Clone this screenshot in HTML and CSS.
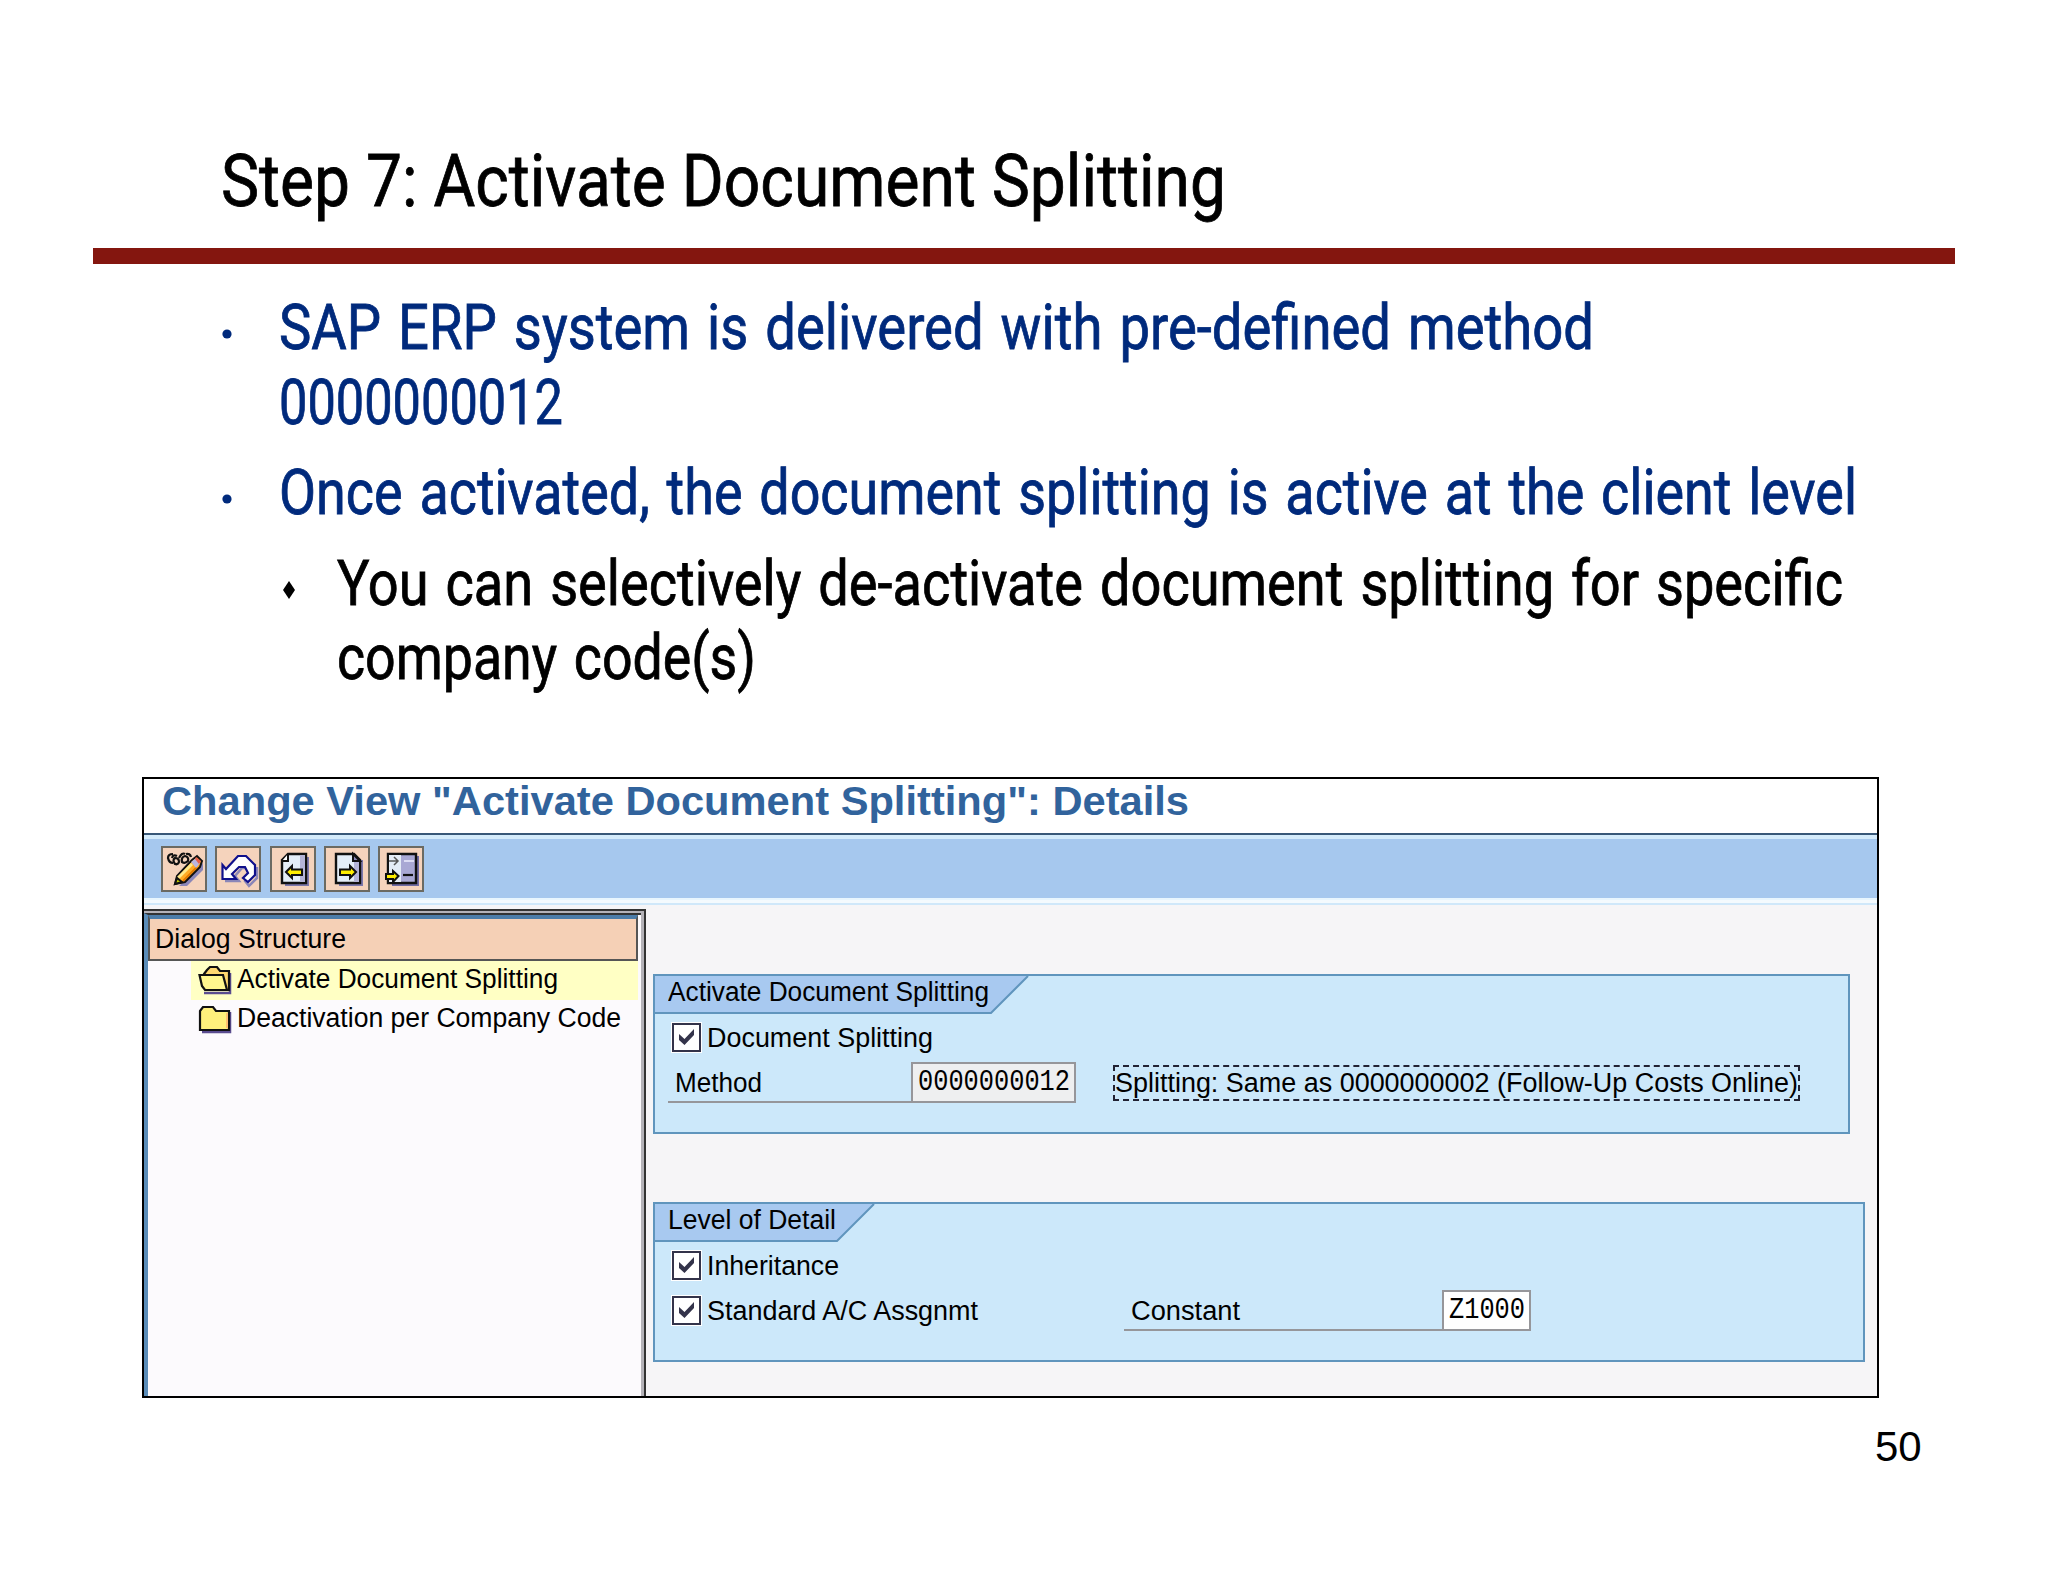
FILE: index.html
```
<!DOCTYPE html>
<html lang="en">
<head>
    <meta charset="UTF-8">
    <meta name="viewport" content="width=device-width, initial-scale=1.0">
    <title>Step 7: Activate Document Splitting</title>
    <link rel="stylesheet" href="styles.css">
</head>
<body>
    <div class="slide">
        <h1><span class="fit" data-width="1005">Step 7: Activate Document Splitting</span></h1>
        <div class="rule"></div>

        <ul class="points">
            <li>
                <svg class="dot" viewBox="0 0 10 10"><circle cx="5" cy="5" r="4.6"/></svg>
                <div>
                    <p><span class="fit" data-width="1315">SAP ERP system is delivered with pre-defined method</span></p>
                    <p><span class="fit" data-width="284">0000000012</span></p>
                </div>
            </li>
            <li>
                <svg class="dot" viewBox="0 0 10 10"><circle cx="5" cy="5" r="4.6"/></svg>
                <div>
                    <p><span class="fit" data-width="1578">Once activated, the document splitting is active at the client level</span></p>
                </div>
            </li>
            <li class="sub">
                <svg class="diamond" viewBox="0 0 12 18"><path d="M6 0L12 9L6 18L0 9Z"/></svg>
                <div>
                    <p><span class="fit" data-width="1506">You can selectively de-activate document splitting for specific</span></p>
                    <p><span class="fit" data-width="419">company code(s)</span></p>
                </div>
            </li>
        </ul>

        <div class="window">
            <div class="titlebar"><span class="fit" data-width="1027">Change View "Activate Document Splitting": Details</span></div>

            <div class="toolbar">
                <button class="tool">
                    <svg viewBox="0 0 46 46">
                        <path d="M18 40L42 17V24L26 40Z" fill="#8a86b8"/>
                        <path d="M14 38L16 30L31 14L36 10L41 15L39 21L24 36Z" fill="#ffab24" stroke="#111" stroke-width="2"/>
                        <path d="M17 32L31 18" stroke="#ffe98a" stroke-width="3"/>
                        <path d="M22 35L36 21" stroke="#e07800" stroke-width="2"/>
                        <path d="M30 16L35 12L39 17L35 22Z" fill="#b9b6e0"/>
                        <path d="M35 11L40 15L38 18L34 13Z" fill="#e8604c"/>
                        <path d="M14 38L16 32L21 36Z" fill="#c8d000" stroke="#111" stroke-width="2"/>
                        <path d="M12 8Q7 8 7 12Q8 17 12 17M11 12Q12 8 16 10M14 18Q11 14 14 12Q18 12 18 16Q17 19 14 18ZM18 12Q21 6 24 8M21 16Q20 11 24 10Q28 11 27 15Q24 18 21 16ZM25 8Q29 7 30 11" fill="none" stroke="#111" stroke-width="2.2"/>
                    </svg>
                </button>
                <button class="tool">
                    <svg viewBox="0 0 46 46">
                        <path d="M10 35H24L20 30L27 22H31L35 28L30 35L34 40L42 32V21" fill="none" stroke="#8a86b8" stroke-width="2.5"/>
                        <path d="M7.500 33V19L11 23L23 10H31L40 19V29L33 36L28 32L33 27L30 21H24L17 28L21 33Z" fill="#fff" stroke="#10108c" stroke-width="2.2"/>
                    </svg>
                </button>
                <button class="tool">
                    <svg viewBox="0 0 46 46">
                        <path d="M15 11H39V40H15Z" fill="#7c78ac"/>
                        <path d="M12 14L18 8H36V37H12Z" fill="#e4eef8" stroke="#111" stroke-width="2.4"/>
                        <path d="M30 9H35V36H30Z" fill="#b4b4d8"/>
                        <path d="M12 15H18V8" fill="#fff" stroke="#111" stroke-width="2"/>
                        <path d="M16 26L22 20V23.500H32V29H22V32Z" fill="#ffee00" stroke="#111" stroke-width="2"/>
                    </svg>
                </button>
                <button class="tool">
                    <svg viewBox="0 0 46 46">
                        <path d="M15 14H39V40H15Z" fill="#7c78ac"/>
                        <path d="M12 8H30L36 14V37H12Z" fill="#e4eef8" stroke="#111" stroke-width="2.4"/>
                        <path d="M30 15H35V36H30Z" fill="#b4b4d8"/>
                        <path d="M29 8V15H36Z" fill="#8a86b8" stroke="#111" stroke-width="2"/>
                        <path d="M32 26L26 20V23.500H16V29H26V32Z" fill="#ffee00" stroke="#111" stroke-width="2"/>
                    </svg>
                </button>
                <button class="tool">
                    <svg viewBox="0 0 46 46">
                        <path d="M14 10H41V40H14Z" fill="#6f6ba2"/>
                        <path d="M10 8H38V37H10Z" fill="#a9a8d4" stroke="#111" stroke-width="2.4"/>
                        <path d="M11 9H23V36H11Z" fill="#e4ecf6"/>
                        <path d="M11 15H20M16 11L20 15L16 19" fill="none" stroke="#555" stroke-width="1.500"/>
                        <path d="M26 15H36" stroke="#dcdcf4" stroke-width="2"/>
                        <path d="M25 29H35" stroke="#111" stroke-width="2.200"/>
                        <path d="M20.500 30L15 25V28H8V33H15V36Z" fill="#ffee00" stroke="#111" stroke-width="2"/>
                    </svg>
                </button>
            </div>
            <div class="strip"></div>

            <div class="content">
                <div class="tree">
                    <div class="tree-inner">
                        <div class="tree-head"><span class="fit" data-width="191">Dialog Structure</span></div>
                        <div class="node selected">
                            <svg viewBox="0 0 34 30">
                                <path d="M6 28H32V8" fill="none" stroke="#5a4c90" stroke-width="2.500"/>
                                <path d="M6 9L9 5L12 2H19L22 6H31V25H8Z" fill="#ffd870" stroke="#111" stroke-width="2.2"/>
                                <path d="M1.500 10H25L29 25H7L4 21Z" fill="#fff68e" stroke="#111" stroke-width="2.2"/>
                            </svg>
                            <span class="fit" data-width="321">Activate Document Splitting</span>
                        </div>
                        <div class="node">
                            <svg viewBox="0 0 34 30">
                                <path d="M4 28H32V8" fill="none" stroke="#5a4c90" stroke-width="2.500"/>
                                <path d="M2 7L5 3H15L18 7H31V26H2Z" fill="#fff07c" stroke="#111" stroke-width="2.2"/>
                                <path d="M29 9V24" stroke="#ffc070" stroke-width="2"/>
                            </svg>
                            <span class="fit" data-width="384">Deactivation per Company Code</span>
                        </div>
                    </div>
                </div>

                <div class="main">
                    <div class="group first">
                        <div class="tab">
                            <svg class="tab-shape" width="375" height="38" viewBox="0 0 375 38">
                                <path d="M0 0H373L336 37H0Z"/>
                                <path class="edge" d="M373 0L336 37H0"/>
                            </svg>
                            <span class="fit" data-width="321">Activate Document Splitting</span>
                        </div>
                        <div class="row">
                            <div class="check">
                                <svg viewBox="0 0 25 25"><path d="M5 9L10.500 14L20 4V10L10.500 20L5 15Z"/></svg>
                                <span class="fit" data-width="226">Document Splitting</span>
                            </div>
                        </div>
                        <div class="row field-row">
                            <div class="label method"><span class="fit" data-width="87">Method</span></div>
                            <div class="field readonly"><span class="fit" data-width="152">0000000012</span></div>
                            <div class="hint"><span class="fit" data-width="683">Splitting: Same as 0000000002 (Follow-Up Costs Online)</span></div>
                        </div>
                    </div>

                    <div class="group second">
                        <div class="tab">
                            <svg class="tab-shape" width="221" height="38" viewBox="0 0 221 38">
                                <path d="M0 0H219L182 37H0Z"/>
                                <path class="edge" d="M219 0L182 37H0"/>
                            </svg>
                            <span class="fit" data-width="168">Level of Detail</span>
                        </div>
                        <div class="row">
                            <div class="check">
                                <svg viewBox="0 0 25 25"><path d="M5 9L10.500 14L20 4V10L10.500 20L5 15Z"/></svg>
                                <span class="fit" data-width="132">Inheritance</span>
                            </div>
                        </div>
                        <div class="row field-row">
                            <div class="check wide">
                                <svg viewBox="0 0 25 25"><path d="M5 9L10.500 14L20 4V10L10.500 20L5 15Z"/></svg>
                                <span class="fit" data-width="271">Standard A/C Assgnmt</span>
                            </div>
                            <div class="label constant"><span class="fit" data-width="109">Constant</span></div>
                            <div class="field"><span class="fit" data-width="76">Z1000</span></div>
                        </div>
                    </div>
                </div>
            </div>
        </div>

        <div class="page-number">50</div>
    </div>
    <script>
        // condense each text run to its set width
        document.querySelectorAll(".fit").forEach(el => {
            const natural = el.getBoundingClientRect().width;
            const width = Number(el.dataset.width);
            el.style.transform = `scaleX(${width / natural})`;
            el.style.marginRight = `${width - natural}px`;
        });
    </script>
</body>
</html>
```
FILE: styles.css
```
* {
    box-sizing: border-box;
}

body {
    margin: 0;
    background-color: #fff;
    color: #000;
    font-family: "Liberation Sans", Arial, sans-serif;
}

.slide {
    width: 2048px;
    height: 1582px;
    padding-top: 141px;
    overflow: hidden;
}

.fit {
    display: inline-block;
    flex: none;
    white-space: nowrap;
    transform-origin: left center;
}

/* Heading and bullet points */
h1 {
    margin: 0 0 27px 221px;
    font-family: Roboto, sans-serif;
    font-size: 73px;
    font-weight: 400;
    -webkit-text-stroke: 0.8px;
    line-height: 80px;
    height: 80px;
    white-space: nowrap;
}

.rule {
    height: 16px;
    margin: 0 93px;
    background-color: #84160f;
}

.points {
    list-style: none;
    margin: 27px 0 82px 221px;
    padding: 0;
    height: 404px;
    display: flex;
    flex-direction: column;
    gap: 16px;
    font-family: Roboto, sans-serif;
    font-size: 62.4px;
    font-weight: 400;
    -webkit-text-stroke: 0.8px;
    word-spacing: 4px;
    line-height: 74.5px;
    color: #002a7c;
}

.points li {
    display: flex;
    white-space: nowrap;
}

.points p {
    margin: 0;
    height: 74.5px;
}

.points .sub {
    padding-left: 62px;
    color: #000;
}

.dot {
    flex: none;
    width: 10px;
    height: 10px;
    margin: 38px 47px 0 1px;
    fill: #002a7c;
}

.diamond {
    flex: none;
    width: 12px;
    height: 18px;
    margin: 34px 42px 0 0;
}

/* Application window */
.window {
    width: 1737px;
    height: 621px;
    margin-left: 142px;
    border: 2px solid #000;
    background-color: #f6f5f7;
    font-size: 27px;
    overflow: hidden;
    display: flex;
    flex-direction: column;
}

.titlebar {
    flex: none;
    height: 56px;
    padding-left: 18px;
    border-bottom: 2px solid #385878;
    background-color: #fff;
    color: #31639c;
    font-size: 41px;
    font-weight: bold;
    line-height: 44px;
}

.toolbar {
    flex: none;
    display: flex;
    gap: 8.3px;
    height: 63px;
    padding: 7px 0 0 17px;
    border-top: 4px solid #d4ebfb;
    background-color: #a6c8ee;
}

.tool {
    width: 46px;
    height: 46px;
    padding: 0;
    border: 2px solid #6b6a62;
    background-color: #f5d3bc;
}

.tool svg {
    display: block;
    width: 46px;
    height: 46px;
    margin: -2px;
}

.strip {
    flex: none;
    height: 7px;
    border-top: 2px solid #e8f6fe;
    border-bottom: 2px solid #d0e8fa;
    background-color: #f4fafe;
}

.content {
    flex: 1;
    display: flex;
}

/* Dialog structure */
.tree {
    width: 502px;
    margin-top: 4px;
    padding: 2px 3px 0 0;
    border-top: 2px solid #333;
    border-right: 2px solid #333;
    background-color: #b4b2b8;
}

.tree-inner {
    height: 100%;
    padding-right: 3px;
    border-top: 2px solid #333;
    border-left: 4px solid #5a8cb8;
    background-color: #fcfafd;
}

.tree-head {
    height: 46px;
    padding-left: 5px;
    border: 2px solid #555;
    border-top: 4px solid #4c7ca8;
    background-color: #f5d0b6;
    line-height: 40px;
}

.node {
    display: flex;
    height: 39px;
    margin-left: 43px;
    padding-left: 7px;
    line-height: 37px;
}

.node svg {
    flex: none;
    width: 34px;
    height: 30px;
    margin: 4px 5px 0 0;
}

.selected {
    background-color: #ffffc4;
}

/* Groups */
.main {
    flex: 1;
    padding: 69px 0 0 7px;
}

.group {
    height: 160px;
    border: 2px solid #6095bd;
    background-color: #cce8fa;
}

.first {
    width: 1197px;
}

.second {
    width: 1212px;
    margin-top: 68px;
}

.tab {
    position: relative;
    height: 38px;
    padding-left: 13px;
    line-height: 33px;
}

.tab-shape {
    position: absolute;
    left: 0;
    top: 0;
    fill: #a8c9f0;
}

.tab-shape .edge {
    fill: none;
    stroke: #6095bd;
    stroke-width: 2;
}

.tab .fit {
    position: relative;
}

.row {
    display: flex;
    margin: 9px 0 0 13px;
    line-height: 30px;
}

.check {
    display: flex;
    height: 29px;
    padding-left: 4px;
}

.check svg {
    flex: none;
    width: 29px;
    height: 29px;
    margin-right: 6px;
    border: 2px solid #33334a;
    background-color: #fff;
    fill: #33334a;
    outline: 1px solid #fff;
}

.wide {
    width: 456px;
    margin-top: 6px;
}

.field-row {
    height: 41px;
    margin-top: 10px;
}

.label {
    height: 41px;
    border-bottom: 2px solid #96969a;
    line-height: 43px;
}

.method {
    width: 243px;
    padding-left: 7px;
}

.constant {
    width: 318px;
    padding-left: 7px;
}

.field {
    height: 41px;
    padding-left: 5px;
    border: 2px solid #96969a;
    background-color: #fff;
    font-family: "Liberation Mono", monospace;
    font-size: 30px;
    line-height: 36px;
}

.second .field {
    width: 89px;
}

.readonly {
    width: 165px;
    background-color: #eeeff0;
}

.hint {
    width: 687px;
    height: 36px;
    margin: 3px 0 0 37px;
    border: 2px dashed #223;
    line-height: 33px;
}

.page-number {
    margin: 26px 0 0 1875px;
    font-size: 42px;
    line-height: 46px;
}
```
